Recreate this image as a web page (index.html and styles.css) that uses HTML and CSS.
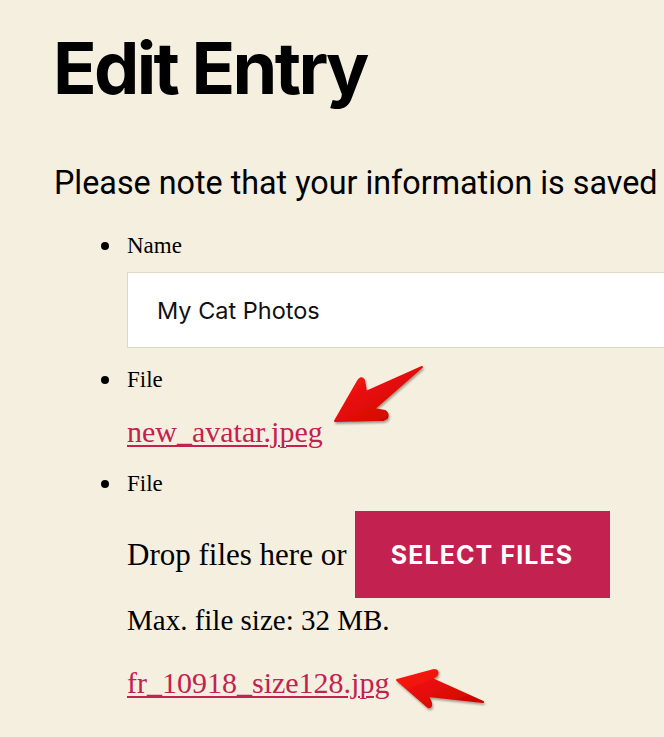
FILE: index.html
```html
<!DOCTYPE html>
<html lang="en">
<head>
<meta charset="utf-8">
<title>Edit Entry</title>
<link rel="stylesheet" href="styles.css">
</head>
<body>
<main class="page">
  <h1 class="title">Edit Entry</h1>
  <p class="note">Please note that your information is saved</p>
  <ul class="fields">
    <li class="field">
      <label class="label">Name</label>
      <div class="input">My Cat Photos</div>
    </li>
    <li class="field">
      <label class="label">File</label>
      <a class="file-link file-link-first" href="#">new_avatar.jpeg</a>
    </li>
    <li class="field field-upload">
      <label class="label">File</label>
      <div class="drop">
        <span class="drop-text">Drop files here or</span>
        <span class="btn">SELECT FILES</span>
      </div>
      <div class="max">Max. file size: 32 MB.</div>
      <a class="file-link file-link-last" href="#">fr_10918_size128.jpg</a>
    </li>
  </ul>
  <svg class="arrow arrow-one" width="100" height="70" viewBox="0 0 100 70">
    <defs>
      <linearGradient id="g1" x1="0" y1="0" x2="1" y2="1">
        <stop offset="0" stop-color="#ff1a0f"/>
        <stop offset="1" stop-color="#c70000"/>
      </linearGradient>
      <filter id="sh1" x="-20%" y="-20%" width="140%" height="150%">
        <feDropShadow dx="1" dy="2" stdDeviation="1.2" flood-color="#000" flood-opacity="0.35"/>
      </filter>
    </defs>
    <path filter="url(#sh1)" fill="url(#g1)" stroke="url(#g1)" stroke-width="2" stroke-linejoin="round"
      d="M5 57 L28 17 Q31 12 34 16 L36 28 L92 3 L44 45 L55 47 Q59 50 57 54 L53 56 Z"/>
  </svg>
  <svg class="arrow arrow-two" width="100" height="50" viewBox="0 0 100 50">
    <defs>
      <linearGradient id="g2" x1="0" y1="0" x2="1" y2="1">
        <stop offset="0" stop-color="#ff1a0f"/>
        <stop offset="1" stop-color="#c70000"/>
      </linearGradient>
      <filter id="sh2" x="-20%" y="-30%" width="140%" height="170%">
        <feDropShadow dx="1" dy="2" stdDeviation="1.2" flood-color="#000" flood-opacity="0.35"/>
      </filter>
    </defs>
    <path filter="url(#sh2)" fill="url(#g2)" stroke="url(#g2)" stroke-width="2" stroke-linejoin="round"
      d="M6 19 L43 9 Q48 9 46 14 L41 18 L92 41 L37 35 L40 42 Q41 47 37 46 Z"/>
  </svg>
</main>
</body>
</html>
```

FILE: styles.css
```css
html, body {
  margin: 0;
  padding: 0;
  overflow: hidden;
  width: 664px;
  height: 737px;
  background: #f5efdf;
}

.page {
  position: relative;
  padding: 24px 0 0 54px;
  height: 737px;
  box-sizing: border-box;
}

.title {
  font-family: "Inter", "Liberation Sans", sans-serif;
  font-weight: 700;
  font-size: 72px;
  letter-spacing: -2.7px;
  line-height: 88px;
  margin: 0 0 0 -1px;
  color: #000;
}

.note {
  font-family: "Roboto", "Liberation Sans", sans-serif;
  font-size: 32.3px;
  line-height: 40px;
  margin: 51px 0 0 0;
  color: #000;
  white-space: nowrap;
}

.fields {
  margin: 29px 0 0 0;
  padding: 0 0 0 73px;
  list-style: none;
  font-family: "Liberation Serif", serif;
  color: #000;
}

.field {
  margin: 0;
}

.field + .field {
  margin-top: 18px;
}

.field + .field-upload {
  margin-top: 21px;
}

.label {
  display: block;
  font-size: 23px;
  line-height: 28px;
}

.label::before {
  content: "";
  display: inline-block;
  width: 8px;
  height: 8px;
  border-radius: 50%;
  background: #000;
  margin-left: -26px;
  margin-right: 18px;
  vertical-align: 3px;
}

.input {
  margin-top: 12px;
  width: 620px;
  height: 76px;
  box-sizing: border-box;
  border: 1px solid #ddd7c6;
  background: #fff;
  padding: 0 0 0 29px;
  display: flex;
  align-items: center;
  font-family: "Inter", "Liberation Sans", sans-serif;
  font-size: 23.5px;
  color: #111;
}

.file-link {
  display: block;
  width: fit-content;
  font-size: 30px;
  line-height: 34px;
  color: #c32150;
  text-decoration: underline;
  text-decoration-thickness: 2px;
  text-underline-offset: 3px;
}

.file-link-first {
  margin-top: 21px;
}

.drop {
  display: flex;
  align-items: center;
  gap: 8px;
  margin-top: 13px;
}

.drop-text {
  font-size: 31px;
}

.btn {
  display: flex;
  align-items: center;
  justify-content: center;
  width: 255px;
  height: 87px;
  background: #c32150;
  color: #fff;
  font-family: "Inter", "Liberation Sans", sans-serif;
  font-weight: 700;
  font-size: 25px;
  letter-spacing: 1.1px;
}

.max {
  font-size: 29px;
  line-height: 34px;
  margin-top: 5px;
}

.file-link-last {
  margin-top: 29px;
}

.arrow {
  position: absolute;
  overflow: visible;
}

.arrow-one {
  left: 330px;
  top: 364px;
}

.arrow-two {
  left: 391px;
  top: 661px;
}
```
